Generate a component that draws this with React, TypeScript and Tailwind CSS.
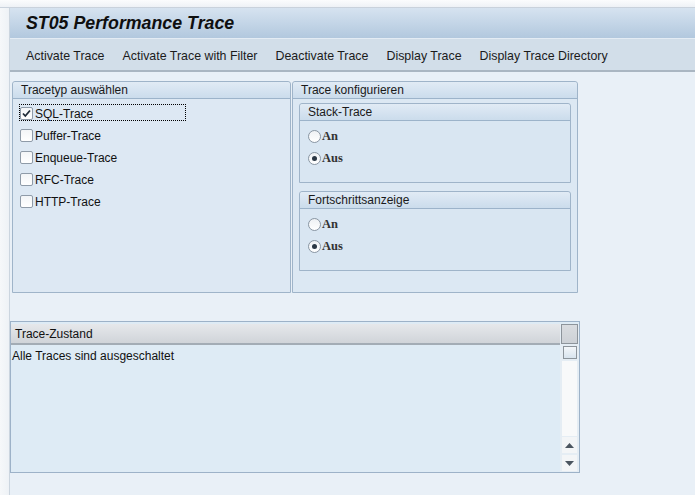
import type { ReactNode } from 'react'

const toolbarItems = [
  'Activate Trace',
  'Activate Trace with Filter',
  'Deactivate Trace',
  'Display Trace',
  'Display Trace Directory',
]

const traceTypes = ['SQL-Trace', 'Puffer-Trace', 'Enqueue-Trace', 'RFC-Trace', 'HTTP-Trace']

function Checkbox({ checked }: { checked?: boolean }) {
  return (
    <span className="flex size-[13px] shrink-0 items-center justify-center rounded-[2px] border border-[#8f9ba8] bg-gradient-to-b from-[#f3f5f7] to-white">
      {checked && (
        <svg viewBox="0 0 11 11" className="size-[11px]" aria-hidden="true">
          <path d="M2 5.5 L4.3 8 L9 2.5" fill="none" stroke="#1e2a36" strokeWidth="1.8" />
        </svg>
      )}
    </span>
  )
}

function Radio({ checked }: { checked?: boolean }) {
  return (
    <span className="flex size-[13px] shrink-0 items-center justify-center rounded-full border border-[#8a96a3] bg-gradient-to-b from-[#eef1f4] to-white">
      {checked && <span className="size-[5px] rounded-full bg-[#2b3744]" />}
    </span>
  )
}

function GroupHeader({ children }: { children: ReactNode }) {
  return (
    <div className="flex h-[17px] shrink-0 items-center rounded-t-[3px] border-b border-[#9cb3ca] bg-gradient-to-b from-[#e1ebf5] to-[#cbdcec] pl-[8px] text-[#1a1a1a]">
      {children}
    </div>
  )
}

function RadioGroup({ title, className }: { title: string; className?: string }) {
  return (
    <div className={`flex h-[80px] flex-col rounded-t-[3px] border border-[#9fb4c9] bg-[#d9e6f2] ${className ?? ''}`}>
      <GroupHeader>{title}</GroupHeader>
      <div className="flex flex-col gap-[9px] pt-[9px] pl-[8px] font-[family-name:'Liberation_Serif',serif] text-[12.5px] font-bold text-[#333]">
        <label className="flex h-[13px] items-center gap-[1px]">
          <Radio />
          <span>An</span>
        </label>
        <label className="flex h-[13px] items-center gap-[1px]">
          <Radio checked />
          <span>Aus</span>
        </label>
      </div>
    </div>
  )
}

export default function App() {
  return (
    <div className="flex h-[495px] w-[695px] flex-col overflow-hidden bg-[#e9f0f7] font-[family-name:'Liberation_Sans',Arial,sans-serif] text-[12px] text-[#111]">
      <div className="h-[8px] shrink-0 border-b border-[#c9d2dc] bg-gradient-to-b from-[#fbfcfd] to-[#eef2f6]" />
      <div className="flex min-h-0 flex-1">
        <div className="w-[9px] shrink-0 bg-gradient-to-r from-[#f6f8fa] to-[#eef2f6]" />
        <div className="flex min-w-0 flex-1 flex-col border-l border-[#cbd5df]">
          {/* title */}
          <div className="flex h-[30px] shrink-0 items-center bg-gradient-to-b from-[#d6e3f0] to-[#b2c8de] pl-[16px]">
            <h1 className="text-[17.8px] font-bold italic text-[#0f0f0f]">ST05 Performance Trace</h1>
          </div>
          {/* toolbar */}
          <div className="flex h-[34px] shrink-0 items-center gap-[18px] border-t border-b-2 border-t-[#e4ecf4] border-b-[#aab6c2] bg-[#d2dee9] pt-[3px] pl-[16px] text-[12.4px] text-[#1b1b1b]">
            {toolbarItems.map(item => (
              <span key={item}>{item}</span>
            ))}
          </div>

          {/* groups */}
          <div className="mt-[9px] flex gap-[1px] pl-[2px]">
            <div className="flex h-[212px] w-[279px] flex-col rounded-t-[3px] border border-[#9fb4c9] bg-[#dde8f3]">
              <GroupHeader>Tracetyp auswählen</GroupHeader>
              <div className="flex flex-col gap-[9px] pt-[8px] pl-[7px]">
                {traceTypes.map((type, index) => (
                  <label
                    key={type}
                    className={`flex h-[13px] items-center gap-[2px] ${index === 0 ? 'relative' : ''}`}
                  >
                    <Checkbox checked={index === 0} />
                    <span>{type}</span>
                    {index === 0 && (
                      <span className="absolute -top-[3px] -left-[1px] h-[17px] w-[167px] border border-dotted border-black" />
                    )}
                  </label>
                ))}
              </div>
            </div>
            <div className="flex h-[212px] w-[286px] flex-col rounded-t-[3px] border border-[#9fb4c9] bg-[#dce8f3]">
              <GroupHeader>Trace konfigurieren</GroupHeader>
              <div className="flex flex-col gap-[8px] px-[6px] pt-[4px]">
                <RadioGroup title="Stack-Trace" />
                <RadioGroup title="Fortschrittsanzeige" className="h-[79px]" />
              </div>
            </div>
          </div>

          {/* status table */}
          <div className="mt-[28px] flex h-[152px] w-[570px] border border-[#9db2c8] bg-[#deebf5] pt-[2px]">
            <div className="flex min-w-0 flex-1 flex-col">
              <div className="flex h-[21px] items-center border-b-2 border-[#a3acb5] bg-gradient-to-b from-[#e6e8eb] to-[#d0d4d9] pl-[4px]">
                Trace-Zustand
              </div>
              <div className="pt-[2px] pl-[1px]">Alle Traces sind ausgeschaltet</div>
            </div>
            <div className="flex w-[19px] shrink-0 flex-col items-center bg-[#e5edf4]">
              <div className="h-[20px] w-[17px] border border-[#8d949b] bg-gradient-to-b from-[#d9dce0] to-[#cdd1d6]" />
              <div className="mt-[2px] h-[13px] w-[14px] border border-[#8d949b] bg-gradient-to-b from-[#f4f7fa] to-[#d9e4ee]" />
              <div className="mt-[2px] w-[15px] flex-1 bg-[#f8f9fa]" />
              <div className="mt-[1px] flex h-[16px] w-[15px] items-center justify-center bg-[#f3f5f7]">
                <svg viewBox="0 0 9 5" className="h-[5px] w-[9px]" aria-hidden="true">
                  <path d="M0 5 L4.5 0 L9 5 Z" fill="#4b5560" />
                </svg>
              </div>
              <div className="mt-[2px] mb-[1px] flex h-[16px] w-[15px] items-center justify-center bg-[#f3f5f7]">
                <svg viewBox="0 0 9 5" className="h-[5px] w-[9px]" aria-hidden="true">
                  <path d="M0 0 L9 0 L4.5 5 Z" fill="#4b5560" />
                </svg>
              </div>
            </div>
          </div>
        </div>
      </div>
    </div>
  )
}
